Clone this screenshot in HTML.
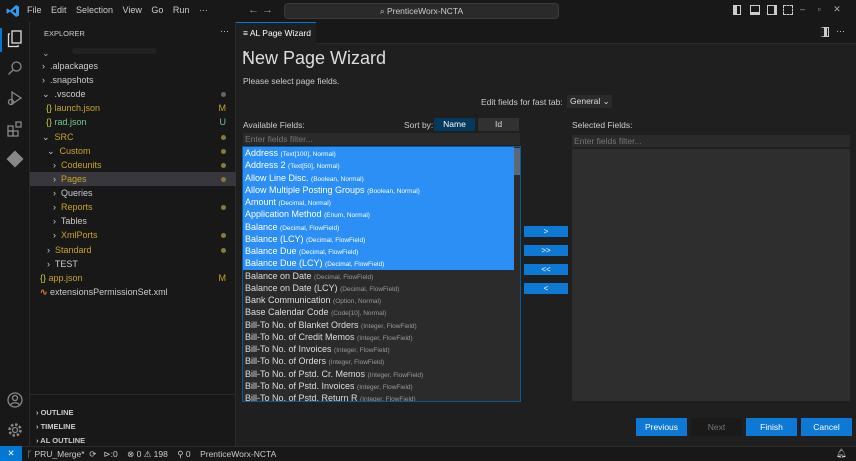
<!DOCTYPE html>
<html><head><meta charset="utf-8"><style>
*{box-sizing:border-box;margin:0;padding:0}
body{width:856px;height:461px;overflow:hidden;background:#1f1f1f;font-family:"Liberation Sans",sans-serif;color:#ccc;position:relative;font-size:9px}
.a{position:absolute}
.title{left:0;top:0;width:856px;height:22px;background:#181818}
.act{left:0;top:22px;width:30px;height:424px;background:#181818;border-right:1px solid #2b2b2b}
.side{left:30px;top:22px;width:206px;height:424px;background:#181818;border-right:1px solid #2b2b2b}
.status{left:0;top:446px;width:856px;height:15px;background:#181818;border-top:1px solid #2b2b2b;font-size:8.5px;color:#ccc}
.row{position:absolute;left:30px;width:206px;height:14px;line-height:14px;font-size:9px}
.dot{position:absolute;right:10px;top:5px;width:5px;height:5px;border-radius:50%;background:#8a7a3a}
.y{color:#c9a227}
.r{height:12.25px;line-height:12.25px;white-space:nowrap;font-size:9px;padding-left:2px;color:#ddd}
.r span{font-size:6.5px;color:#999}
.sel{background:#2b8ff5;width:271px}
.sel .r{color:#fff}.sel .r span{color:#fff}
.btn{position:absolute;background:#0e78d5;color:#fff;text-align:center;font-size:8px}
.bb{position:absolute;top:418px;height:18px;line-height:18px;width:51px;text-align:center;font-size:8.5px;background:#0e78d5;color:#fff}
</style></head><body>
<div class="a title">
 <svg class="a" style="left:6px;top:4px" width="14" height="14" viewBox="0 0 14 14"><path d="M10 1 L13 2.5 V11.5 L10 13 L4 7.5 L1.5 9.5 L0.5 9 V5 L1.5 4.5 L4 6.5 Z M10 4.5 L6.5 7 L10 9.5Z" fill="#2b9cf0"/></svg>
 <div class="a" style="left:27px;top:5px;font-size:9px;color:#ccc;word-spacing:7px">File Edit Selection View Go Run ···</div>
 <div class="a" style="left:248px;top:4px;color:#999;font-size:11px">← →</div>
 <div class="a" style="left:284px;top:3px;width:275px;height:16px;background:#2a2a2a;border:1px solid #3a3a3a;border-radius:4px;text-align:center;line-height:14px;font-size:8.5px;color:#ccc">⌕ PrenticeWorx-NCTA</div>
 <div class="a" style="left:733px;top:5px;width:8px;height:10px;border:1px solid #ccc;border-left:4px solid #ccc"></div>
 <div class="a" style="left:750px;top:5px;width:10px;height:10px;border:1px solid #ccc;border-bottom:3px solid #ccc"></div>
 <div class="a" style="left:767px;top:5px;width:10px;height:10px;border:1px solid #ccc;border-right:3px solid #ccc"></div>
 <div class="a" style="left:783px;top:5px;width:10px;height:10px;border:1px dashed #ccc"></div>
 <div class="a" style="left:800px;top:4px;color:#aaa;font-size:9px;word-spacing:10px">– ▫ ✕</div>
</div>
<div class="a act">
 <div class="a" style="left:0;top:6px;width:2px;height:24px;background:#0078d4"></div>
 <svg class="a" style="left:7px;top:8px" width="16" height="18" viewBox="0 0 16 18" fill="none" stroke="#ddd" stroke-width="1.3"><rect x="5" y="1" width="9" height="12"/><path d="M3 4 H1.5 V16.5 H11 V15"/></svg>
 <svg class="a" style="left:7px;top:38px" width="16" height="16" viewBox="0 0 16 16" fill="none" stroke="#888" stroke-width="1.3"><circle cx="9.5" cy="6.5" r="4.5"/><path d="M6 10 L1.5 14.5"/></svg>
 <svg class="a" style="left:7px;top:68px" width="16" height="16" viewBox="0 0 16 16" fill="none" stroke="#888" stroke-width="1.3"><path d="M5 2 L14 8 L5 14Z"/><circle cx="4" cy="12" r="2.5"/></svg>
 <svg class="a" style="left:7px;top:99px" width="16" height="16" viewBox="0 0 16 16" fill="none" stroke="#888" stroke-width="1.3"><rect x="1" y="5" width="5" height="5"/><rect x="1" y="10" width="5" height="5"/><rect x="6" y="10" width="5" height="5"/><rect x="9" y="1" width="5" height="5"/></svg>
 <div class="a" style="left:9px;top:131px;width:12px;height:12px;background:#888;transform:rotate(45deg)"></div>
 <svg class="a" style="left:7px;top:370px" width="16" height="16" viewBox="0 0 16 16" fill="none" stroke="#888" stroke-width="1.3"><circle cx="8" cy="8" r="7"/><circle cx="8" cy="6" r="2.5"/><path d="M3.5 13 C5 10 11 10 12.5 13"/></svg>
 <svg class="a" style="left:7px;top:400px" width="16" height="16" viewBox="0 0 16 16" fill="none" stroke="#888" stroke-width="1.3"><circle cx="8" cy="8" r="2.5"/><circle cx="8" cy="8" r="5.5" stroke-dasharray="2.5 1.8" stroke-width="2.5"/></svg>
</div>
<div class="a side">
 <div class="a" style="left:14px;top:7px;font-size:7.5px;color:#ccc">EXPLORER</div>
 <div class="a" style="left:190px;top:4px;color:#ccc">···</div>
 <div class="a" style="left:12px;top:26px;color:#aaa">⌄</div>
 <div class="a" style="left:42px;top:26px;width:85px;height:6px;background:#222;border-radius:3px"></div>
 <div class="a" style="left:0;top:372px;width:206px;border-top:1px solid #2b2b2b"></div>
 <div class="a" style="left:6px;top:384px;font-size:7.5px;font-weight:bold;line-height:14px;color:#ccc">› OUTLINE<br>› TIMELINE<br>› AL OUTLINE</div>
</div>
<div class="row" style="top:59px;padding-left:12px">›&nbsp; .alpackages</div>
<div class="row" style="top:73px;padding-left:12px">›&nbsp; .snapshots</div>
<div class="row" style="top:87px;padding-left:12px">⌄&nbsp; .vscode<i class="dot" style="background:#666"></i></div>
<div class="row y" style="top:101px;padding-left:16px"><b style="color:#cbcb41;font-weight:normal">{}</b> launch.json<span class="a" style="right:10px;color:#c9a227">M</span></div>
<div class="row" style="top:115px;padding-left:16px;color:#73c991"><b style="color:#cbcb41;font-weight:normal">{}</b> rad.json<span class="a" style="right:10px">U</span></div>
<div class="row y" style="top:130px;padding-left:12px"><span style="color:#ccc">⌄</span>&nbsp; SRC<i class="dot"></i></div>
<div class="row y" style="top:144px;padding-left:17px"><span style="color:#ccc">⌄</span>&nbsp; Custom<i class="dot"></i></div>
<div class="row y" style="top:158px;padding-left:23px"><span style="color:#ccc">›</span>&nbsp; Codeunits<i class="dot"></i></div>
<div class="row y" style="top:172px;padding-left:23px;background:#37373d"><span style="color:#ccc">›</span>&nbsp; Pages<i class="dot"></i></div>
<div class="row" style="top:186px;padding-left:23px">›&nbsp; Queries</div>
<div class="row y" style="top:200px;padding-left:23px"><span style="color:#ccc">›</span>&nbsp; Reports<i class="dot"></i></div>
<div class="row" style="top:214px;padding-left:23px">›&nbsp; Tables</div>
<div class="row y" style="top:228px;padding-left:23px"><span style="color:#ccc">›</span>&nbsp; XmlPorts<i class="dot"></i></div>
<div class="row y" style="top:243px;padding-left:17px"><span style="color:#ccc">›</span>&nbsp; Standard<i class="dot"></i></div>
<div class="row" style="top:257px;padding-left:17px">›&nbsp; TEST</div>
<div class="row y" style="top:271px;padding-left:10px"><b style="color:#cbcb41;font-weight:normal">{}</b> app.json<span class="a" style="right:10px">M</span></div>
<div class="row" style="top:285px;padding-left:10px"><b style="color:#e37933">∿</b> extensionsPermissionSet.xml</div>

<div class="a" style="left:236px;top:22px;width:620px;height:22px;background:#181818;border-bottom:1px solid #2b2b2b"></div>
<div class="a" style="left:236px;top:22px;width:80px;height:23px;background:#1f1f1f;border-top:1px solid #0078d4;line-height:21px;padding-left:7px;font-size:8.5px;color:#fff">≡ AL Page Wizard ✕</div>
<div class="a" style="left:820px;top:27px;width:9px;height:10px;border:1px solid #ccc;border-left:4px solid #1f1f1f;box-shadow:inset 3px 0 0 #ccc"></div>
<div class="a" style="left:836px;top:26px;color:#ccc">···</div>

<div class="a" style="left:242px;top:48px;font-size:18px;color:#ddd">New Page Wizard</div>
<div class="a" style="left:243px;top:76px;font-size:8.5px;color:#ccc">Please select page fields.</div>
<div class="a" style="left:481px;top:97px;font-size:8.5px;color:#ccc">Edit fields for fast tab:</div>
<div class="a" style="left:567px;top:95px;width:45px;height:13px;background:#2a2a2a;font-size:8.5px;line-height:13px;padding-left:3px;color:#ddd">General ⌄</div>
<div class="a" style="left:243px;top:120px;font-size:8.5px;color:#ccc">Available Fields:</div>
<div class="a" style="left:404px;top:120px;font-size:8.5px;color:#ccc">Sort by:</div>
<div class="a" style="left:434px;top:118px;width:41px;height:13px;background:#04395e;color:#fff;text-align:center;line-height:13px;font-size:8.5px">Name</div>
<div class="a" style="left:478px;top:118px;width:41px;height:13px;background:#313131;color:#ddd;text-align:center;line-height:13px;font-size:8.5px">Id</div>
<div class="a" style="left:243px;top:133px;width:277px;height:12px;background:#2a2a2a;color:#777;font-size:8.5px;line-height:12px;padding-left:2px">Enter fields filter...</div>
<div class="a" style="left:242px;top:146px;width:279px;height:256px;border:1px solid #0b5a95;background:#2b2b2b;overflow:hidden">
<div class="sel">
<div class="r">Address <span>(Text[100], Normal)</span></div>
<div class="r">Address 2 <span>(Text[50], Normal)</span></div>
<div class="r">Allow Line Disc. <span>(Boolean, Normal)</span></div>
<div class="r">Allow Multiple Posting Groups <span>(Boolean, Normal)</span></div>
<div class="r">Amount <span>(Decimal, Normal)</span></div>
<div class="r">Application Method <span>(Enum, Normal)</span></div>
<div class="r">Balance <span>(Decimal, FlowField)</span></div>
<div class="r">Balance (LCY) <span>(Decimal, FlowField)</span></div>
<div class="r">Balance Due <span>(Decimal, FlowField)</span></div>
<div class="r">Balance Due (LCY) <span>(Decimal, FlowField)</span></div>
</div>
<div class="r">Balance on Date <span>(Decimal, FlowField)</span></div>
<div class="r">Balance on Date (LCY) <span>(Decimal, FlowField)</span></div>
<div class="r">Bank Communication <span>(Option, Normal)</span></div>
<div class="r">Base Calendar Code <span>(Code[10], Normal)</span></div>
<div class="r">Bill-To No. of Blanket Orders <span>(Integer, FlowField)</span></div>
<div class="r">Bill-To No. of Credit Memos <span>(Integer, FlowField)</span></div>
<div class="r">Bill-To No. of Invoices <span>(Integer, FlowField)</span></div>
<div class="r">Bill-To No. of Orders <span>(Integer, FlowField)</span></div>
<div class="r">Bill-To No. of Pstd. Cr. Memos <span>(Integer, FlowField)</span></div>
<div class="r">Bill-To No. of Pstd. Invoices <span>(Integer, FlowField)</span></div>
<div class="r">Bill-To No. of Pstd. Return R <span>(Integer, FlowField)</span></div>
<div class="a" style="left:271px;top:1px;width:6px;height:27px;background:#5a6a7a"></div>
</div>
<div class="btn" style="left:524px;top:226px;width:44px;height:11px;line-height:11px">&gt;</div>
<div class="btn" style="left:524px;top:245px;width:44px;height:11px;line-height:11px">&gt;&gt;</div>
<div class="btn" style="left:524px;top:264px;width:44px;height:11px;line-height:11px">&lt;&lt;</div>
<div class="btn" style="left:524px;top:283px;width:44px;height:11px;line-height:11px">&lt;</div>

<div class="a" style="left:572px;top:120px;font-size:8.5px;color:#ccc">Selected Fields:</div>
<div class="a" style="left:572px;top:135px;width:278px;height:12px;background:#2a2a2a;color:#777;font-size:8.5px;line-height:12px;padding-left:2px">Enter fields filter...</div>
<div class="a" style="left:572px;top:149px;width:278px;height:252px;background:#2e2e2e"></div>

<div class="bb" style="left:636px">Previous</div>
<div class="bb" style="left:691px;background:#1a1a1a;color:#777">Next</div>
<div class="bb" style="left:746px">Finish</div>
<div class="bb" style="left:801px">Cancel</div>

<div class="a status">
 <div class="a" style="left:0;top:-1px;width:22px;height:15px;background:#0078d4;color:#fff;text-align:center;line-height:15px">✕</div>
 <div class="a" style="left:27px;top:2px;white-space:pre">ᚴ PRU_Merge*  ⟳   ⊳:0    ⊗ 0 ⚠ 198    ⚲ 0    PrenticeWorx-NCTA</div>
 <div class="a" style="left:836px;top:1px">🔔︎</div>
</div>
</body></html>
